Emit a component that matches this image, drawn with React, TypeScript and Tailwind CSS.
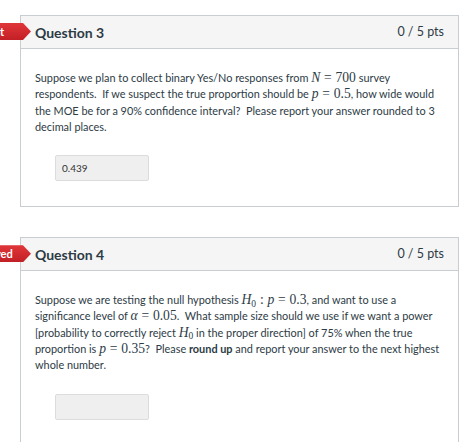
import React from 'react';

function M({ children }: { children: React.ReactNode }) {
  return (
    <span className="font-['Liberation_Serif',serif] text-[13.6px] leading-[1] whitespace-nowrap">{children}</span>
  );
}

function V({ children }: { children: React.ReactNode }) {
  return <i className="italic">{children}</i>;
}

function Rel({ children }: { children: React.ReactNode }) {
  return <span className="mx-[0.28em]">{children}</span>;
}

function H0() {
  return (
    <>
      <V>H</V>
      <span className="text-[0.7em] relative top-[0.25em]">0</span>
    </>
  );
}

function Line({ children }: { children: React.ReactNode }) {
  return <span className="block whitespace-nowrap">{children}</span>;
}

function Tag({ label }: { label: string }) {
  return (
    <div className="absolute left-[-80px] top-[7px] h-[17px] w-[90px] bg-gradient-to-b from-[#e0363a] to-[#c21f26] [clip-path:polygon(0_0,82px_0,90px_50%,82px_100%,0_100%)] flex items-center">
      <span className="w-[82px] text-center text-white font-bold text-[11px] leading-none">{label}</span>
    </div>
  );
}

function Question({
  tag,
  title,
  answer,
  children,
}: {
  tag: string;
  title: string;
  answer: string;
  children: React.ReactNode;
}) {
  return (
    <div className="relative border border-[#c7cdd1] bg-white">
      <Tag label={tag} />
      <div className="h-[33px] bg-[#f5f5f5] border-b border-[#c7cdd1] flex items-center justify-between px-[14px]">
        <h2 className="text-[14px] font-bold text-[#2d3b45]">{title}</h2>
        <span className="text-[12.5px] text-[#2d3b45]">0 / 5 pts</span>
      </div>
      <div className="px-[14px] pt-[21px] pb-[25px]">
        <p className="text-[10.9px] leading-[16.3px] text-[#2d3b45]">{children}</p>
        <div className="mt-[20px] ml-[20px] w-[94px] h-[26px] bg-[#efefef] border border-[#dcdcdc] rounded-[2px] flex items-center px-[6px] text-[10px] text-[#333]">
          {answer}
        </div>
      </div>
    </div>
  );
}

export default function App() {
  return (
    <div className="w-[474px] h-[442px] overflow-hidden bg-white pl-[20px] pr-[15px] pt-[15px] font-['Lato','Noto_Sans',sans-serif]">
      <div className="flex flex-col gap-[30px]">
        <Question tag="Incorrect" title="Question 3" answer="0.439">
          <Line>
            Suppose we plan to collect binary Yes/No responses from{' '}
            <M>
              <V>N</V>
              <Rel>=</Rel>700
            </M>{' '}
            survey
          </Line>
          <Line>
            respondents.&nbsp; If we suspect the true proportion should be{' '}
            <M>
              <V>p</V>
              <Rel>=</Rel>0.5
            </M>
            , how wide would
          </Line>
          <Line>the MOE be for a 90% confidence interval?&nbsp; Please report your answer rounded to 3</Line>
          <Line>decimal places.</Line>
        </Question>
        <Question tag="Unanswered" title="Question 4" answer="">
          <Line>
            Suppose we are testing the null hypothesis{' '}
            <M>
              <H0 />
              <Rel>:</Rel>
              <V>p</V>
              <Rel>=</Rel>0.3
            </M>
            , and want to use a
          </Line>
          <Line>
            significance level of{' '}
            <M>
              <V>α</V>
              <Rel>=</Rel>0.05
            </M>
            .&nbsp; What sample size should we use if we want a power
          </Line>
          <Line>
            [probability to correctly reject{' '}
            <M>
              <H0 />
            </M>{' '}
            in the proper direction] of 75% when the true
          </Line>
          <Line>
            proportion is{' '}
            <M>
              <V>p</V>
              <Rel>=</Rel>0.35
            </M>
            ?&nbsp; Please <b className="font-bold">round up</b> and report your answer to the next highest
          </Line>
          <Line>whole number.</Line>
        </Question>
      </div>
    </div>
  );
}
